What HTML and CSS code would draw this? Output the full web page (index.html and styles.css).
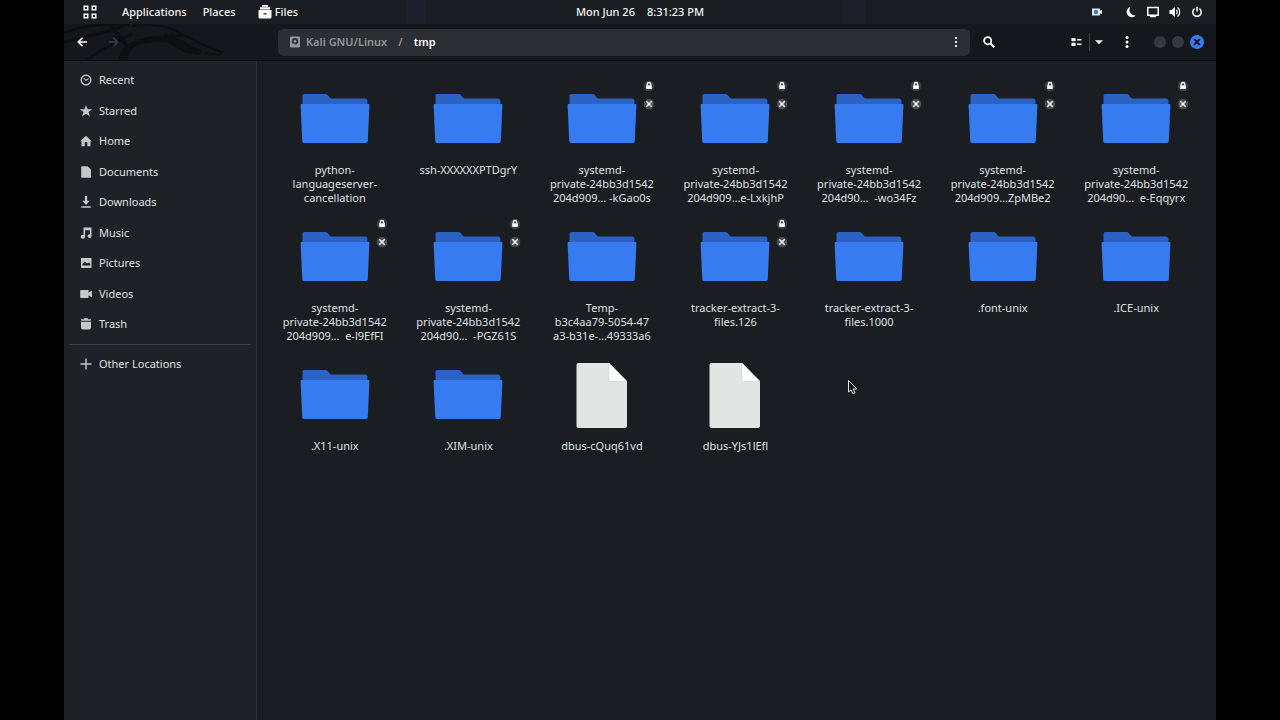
FILE: index.html
```html
<!DOCTYPE html>
<html lang="en">
<head>
<meta charset="utf-8">
<title>tmp - Files</title>
<link rel="stylesheet" href="styles.css">
</head>
<body>
<svg class="defs" aria-hidden="true">
  <symbol id="folder" viewBox="0 0 70 86">
    <path d="M2.500 30V18.500a1.500 1.500 0 0 1 1.500-1.500h21.500c1 0 1.500.3 2.200 1l2.300 2.700c.6.600 1.200.9 2 .9H65c1.500 0 2 .7 2.400 2V30z" fill="#2c62c4"/>
    <path d="M1.800 27h66.400c.9 0 1.300.6 1.200 1.400L67.800 64c0 1.200-.8 2-1.800 2H4c-1 0-1.800-.8-1.800-2L.6 28.400c0-.8.300-1.400 1.200-1.400z" fill="#367bf0"/>
  </symbol>
  <symbol id="file" viewBox="0 0 70 86">
    <path d="M11.500 10H42l18 18v45a2 2 0 0 1-2 2H11.500a2 2 0 0 1-2-2V12a2 2 0 0 1 2-2z" fill="#e3e4e4"/>
    <path d="M42 10l18 18.500H43.500a2 2 0 0 1-2-2V10z" fill="#fff"/>
    <path d="M41.500 11v15.500a2 2 0 0 0 2 2H60" fill="none" stroke="#c9cacb" stroke-width=".6"/>
  </symbol>
  <symbol id="lock" viewBox="0 0 12 12">
    <circle cx="6" cy="6" r="5.300" fill="#3b3e43"/>
    <path d="M3.200 5.300h5.600v3.600H3.200z" fill="#fff"/>
    <path d="M4.300 5.500V4.200a1.700 1.700 0 0 1 3.400 0v1.300" fill="none" stroke="#fff" stroke-width="1.300"/>
  </symbol>
  <symbol id="denied" viewBox="0 0 12 12">
    <circle cx="6" cy="6" r="5.300" fill="#4a4d51"/>
    <path d="M3.300 3.300l5.400 5.400m0-5.400l-5.400 5.400" stroke="#fff" stroke-width="1.400"/>
  </symbol>
</svg>

<div class="desktop">
  <header class="panel">
    <nav class="panel-left" aria-label="Desktop">
      <button class="bare" aria-label="Show apps"><svg width="14" height="14" viewBox="0 0 14 14" fill="none" stroke="#fff" stroke-width="1.500"><path d="M1.250 1.250h3.500v3.500h-3.500zM9.250 1.250h3.500v3.500h-3.500zM1.250 9.250h3.500v3.500h-3.500zM9.250 9.250h3.500v3.500h-3.500z"/></svg></button>
      <button class="bare apps">Applications</button>
      <button class="bare">Places</button>
      <button class="bare files"><svg width="14" height="14" viewBox="0 0 14 14" fill="#fff"><path d="M4 0h6v1.800H4zM2 2.300h10V4.500H2z"/><path d="M.5 5h13v7a1.500 1.500 0 0 1-1.500 1.500H2A1.500 1.500 0 0 1 .5 12zM5.500 8.300v1.200h3V8.300z" fill-rule="evenodd"/></svg>Files</button>
    </nav>
    <time class="clock"><span>Mon Jun 26</span><span>8:31:23 PM</span></time>
    <div class="status">
      <svg class="cam" width="12" height="12" viewBox="0 0 12 12"><path d="M1 2.500h8v2l2-.5v4l-2-.5v2H1z" fill="#dfe5ea"/><circle cx="5" cy="6" r="2.200" fill="#4678b8"/></svg>
      <svg width="12" height="12" viewBox="0 0 12 12"><path d="M5.500.8A5.300 5.300 0 1 0 10.800 9.500 5.600 5.600 0 0 1 5.500.8z" fill="#fff"/></svg>
      <svg width="12" height="12" viewBox="0 0 12 12" fill="none" stroke="#fff" stroke-width="1.500"><path d="M.8 1.500h10.400v7.800H.8z"/><path d="M3 10.500h6"/></svg>
      <svg width="12" height="12" viewBox="0 0 12 12"><path d="M.5 4h2.200L6 1v10L2.700 8H.5z" fill="#fff"/><path d="M7.300 4c1.200 1 1.200 3 0 4M8.500 1.500c3 2 3 7 0 9" fill="none" stroke="#fff" stroke-width="1.200"/></svg>
      <svg width="12" height="12" viewBox="0 0 12 12" fill="none" stroke="#fff" stroke-width="1.500"><path d="M3.600 2.700a4.200 4.200 0 1 0 4.800 0M6 .8v4.700"/></svg>
    </div>
  </header>

  <div class="toolbar">
    <svg class="dragon" width="160" height="37" viewBox="0 0 160 37" fill="none" stroke="#0d1013" aria-hidden="true">
      <path d="M0 9C18 2 40-2 66 1M0 18C20 13 42 9 60 2M22 37C34 28 50 18 68 10" stroke-width="3"/>
      <path d="M46 1l18 22" stroke-width="3"/>
      <path d="M54 37c2-8 4-12 8-15 12-9 24-10 40-10 12 0 18 5 26 10l10 4-3 5-16-3c-10-7-14-10-22-10-14 0-22 2-28 6-4 4-5 8-6 13z" fill="#0d1013" stroke="none"/>
      <path d="M100 13l2-4 3 4 3-5 3 4 4-4 3 5" fill="#0d1013"/>
      <path d="M68 2c22-3 38 0 50 8l28 14 12 4-3 3-14-2" stroke-width="2"/>
    </svg>
    <div class="history">
      <button class="bare" aria-label="Back"><svg width="12" height="12" viewBox="0 0 12 12" fill="none" stroke="#fff" stroke-width="1.600"><path d="M11 6H2.500M6.500 1.800L2.300 6l4.200 4.200"/></svg></button>
      <button class="bare" aria-label="Forward" disabled><svg width="12" height="12" viewBox="0 0 12 12" fill="none" stroke="#3b3f43" stroke-width="1.600"><path d="M1 6h8.500M5.500 1.800L9.700 6l-4.200 4.200"/></svg></button>
    </div>
    <div class="pathbar">
      <button class="bare crumb"><svg width="12" height="12" viewBox="0 0 12 12"><path d="M2 .5h8a1 1 0 0 1 1 1v9a1 1 0 0 1-1 1H2a1 1 0 0 1-1-1v-9a1 1 0 0 1 1-1zM6 2a3.200 3.200 0 1 0 0 6.400A3.200 3.200 0 0 0 6 2z" fill="#93969a" fill-rule="evenodd"/><circle cx="6" cy="5.200" r="1.300" fill="#93969a"/><path d="M3 10l2.500-3" stroke="#93969a"/></svg>Kali GNU/Linux</button>
      <span class="slash">/</span>
      <button class="bare current">tmp</button>
      <button class="bare more" aria-label="Folder menu"><svg width="4" height="12" viewBox="0 0 4 12" fill="#e4e6e8"><path d="M1 1h2v2H1zM1 5h2v2H1zM1 9h2v2H1z"/></svg></button>
    </div>
    <div class="tools">
      <button class="bare search" aria-label="Search"><svg width="12" height="12" viewBox="0 0 12 12" fill="none" stroke="#fff" stroke-width="1.700"><circle cx="4.700" cy="4.700" r="3.600"/><path d="M7.300 7.300l4 4" stroke-width="2"/></svg></button>
      <button class="bare" aria-label="List view"><svg width="12" height="12" viewBox="0 0 12 12" fill="#fff"><path d="M1.500 2h4v3.300h-4zM1.500 6.700h4V10h-4zM7 3h4.500v1.500H7zM7 7.500h4.500V9H7z"/></svg></button>
      <button class="bare drop" aria-label="View options"><svg width="8" height="12" viewBox="0 0 8 12" fill="#fff"><path d="M0 4.200h8L4 8.200z"/></svg></button>
      <button class="bare menu" aria-label="Menu"><svg width="4" height="14" viewBox="0 0 4 14" fill="#fff"><circle cx="2" cy="2.500" r="1.500"/><circle cx="2" cy="7" r="1.500"/><circle cx="2" cy="11.500" r="1.500"/></svg></button>
      <button class="dot" aria-label="Minimize"></button>
      <button class="dot" aria-label="Maximize"></button>
      <button class="dot close" aria-label="Close"><svg width="8" height="8" viewBox="0 0 8 8" stroke="#10151c" stroke-width="1.900"><path d="M1.200 1.200l5.600 5.600m0-5.600L1.200 6.800"/></svg></button>
    </div>
  </div>

  <div class="content">
    <nav class="sidebar" aria-label="Places">
      <div class="places">
        <a href="#"><svg viewBox="0 0 12 12"><circle cx="6" cy="6" r="4.800" fill="none" stroke="#c5c8ca" stroke-width="1.400"/><path d="M3.800 4.300L6 6.300l2.500-1.500" fill="none" stroke="#c5c8ca" stroke-width="1.100"/></svg>Recent</a>
        <a href="#"><svg viewBox="0 0 12 12"><path d="M6 .2l1.600 4H12L8.500 7l1.400 4.500L6 8.800l-3.900 2.700L3.500 7 0 4.200h4.400z"/></svg>Starred</a>
        <a href="#"><svg viewBox="0 0 12 12"><path d="M6 .7l5.700 5.500h-1.200v5H7.300V8a1.300 1.300 0 0 0-2.600 0v3.200H1.500v-5H.3z"/></svg>Home</a>
        <a href="#"><svg viewBox="0 0 12 12"><path d="M2 .3h5.500L11 3.800V11a.8.800 0 0 1-.8.800H2a.8.800 0 0 1-.8-.8V1.100A.8.800 0 0 1 2 .3z"/></svg>Documents</a>
        <a href="#"><svg viewBox="0 0 12 12"><path d="M4.900 0h2.200v4.800h2.500L6 9 2.400 4.800h2.500zM1.300 10.300h9.400v1.400H1.300z"/></svg>Downloads</a>
        <a href="#"><svg viewBox="0 0 12 12"><path d="M3.500.5h8V9a2 1.900 0 1 1-1.600-1.800V3.300H5.100v6.500A2.200 2 0 1 1 3.500 7.900z"/></svg>Music</a>
        <a href="#"><svg viewBox="0 0 12 12"><path d="M1 1h10.500v10H1zM2.500 8.500h7.700V6.800L8.500 5.500l-1.700 1L5 4.500 2.500 7z" fill-rule="evenodd"/></svg>Pictures</a>
        <a href="#"><svg viewBox="0 0 12 12"><path d="M1 2h7.500v2.700L12 2.500v7L8.500 7.300V10H1a.8.800 0 0 1-.8-.8V2.800A.8.800 0 0 1 1 2z"/></svg>Videos</a>
        <a href="#"><svg viewBox="0 0 12 12"><path d="M4 .3h4v.9h3v1.600H1V1.200h3zM1 3.700h10v5.800a2 2 0 0 1-2 2H3a2 2 0 0 1-2-2z"/></svg>Trash</a>
      </div>
      <hr>
      <a href="#"><svg viewBox="0 0 12 12"><path d="M5.300.5h1.400v4.800h4.800v1.400H6.700v4.800H5.300V6.700H.5V5.300h4.800z"/></svg>Other Locations</a>
    </nav>

    <main class="grid">
      <div class="item"><svg class="icon"><use href="#folder"/></svg><span>python-<br>languageserver-<br>cancellation</span></div>
      <div class="item"><svg class="icon"><use href="#folder"/></svg><span>ssh-XXXXXXPTDgrY</span></div>
      <div class="item"><svg class="icon"><use href="#folder"/></svg><div class="badges"><svg><use href="#lock"/></svg><svg><use href="#denied"/></svg></div><span>systemd-<br>private-24bb3d1542<br>204d909… -kGao0s</span></div>
      <div class="item"><svg class="icon"><use href="#folder"/></svg><div class="badges"><svg><use href="#lock"/></svg><svg><use href="#denied"/></svg></div><span>systemd-<br>private-24bb3d1542<br>204d909…e-LxkjhP</span></div>
      <div class="item"><svg class="icon"><use href="#folder"/></svg><div class="badges"><svg><use href="#lock"/></svg><svg><use href="#denied"/></svg></div><span>systemd-<br>private-24bb3d1542<br>204d90…&nbsp; -wo34Fz</span></div>
      <div class="item"><svg class="icon"><use href="#folder"/></svg><div class="badges"><svg><use href="#lock"/></svg><svg><use href="#denied"/></svg></div><span>systemd-<br>private-24bb3d1542<br>204d909…ZpMBe2</span></div>
      <div class="item"><svg class="icon"><use href="#folder"/></svg><div class="badges"><svg><use href="#lock"/></svg><svg><use href="#denied"/></svg></div><span>systemd-<br>private-24bb3d1542<br>204d90…&nbsp; e-Eqqyrx</span></div>
      <div class="item"><svg class="icon"><use href="#folder"/></svg><div class="badges"><svg><use href="#lock"/></svg><svg><use href="#denied"/></svg></div><span>systemd-<br>private-24bb3d1542<br>204d909…&nbsp; e-l9EfFI</span></div>
      <div class="item"><svg class="icon"><use href="#folder"/></svg><div class="badges"><svg><use href="#lock"/></svg><svg><use href="#denied"/></svg></div><span>systemd-<br>private-24bb3d1542<br>204d90…&nbsp; -PGZ61S</span></div>
      <div class="item"><svg class="icon"><use href="#folder"/></svg><span>Temp-<br>b3c4aa79-5054-47<br>a3-b31e-…49333a6</span></div>
      <div class="item"><svg class="icon"><use href="#folder"/></svg><div class="badges"><svg><use href="#lock"/></svg><svg><use href="#denied"/></svg></div><span>tracker-extract-3-<br>files.126</span></div>
      <div class="item"><svg class="icon"><use href="#folder"/></svg><span>tracker-extract-3-<br>files.1000</span></div>
      <div class="item"><svg class="icon"><use href="#folder"/></svg><span>.font-unix</span></div>
      <div class="item"><svg class="icon"><use href="#folder"/></svg><span>.ICE-unix</span></div>
      <div class="item"><svg class="icon"><use href="#folder"/></svg><span>.X11-unix</span></div>
      <div class="item"><svg class="icon"><use href="#folder"/></svg><span>.XIM-unix</span></div>
      <div class="item"><svg class="icon"><use href="#file"/></svg><span>dbus-cQuq61vd</span></div>
      <div class="item"><svg class="icon"><use href="#file"/></svg><span>dbus-YJs1lEfl</span></div>
    </main>
  </div>
</div>
<svg class="pointer" width="12" height="16" viewBox="0 0 12 16" aria-hidden="true"><path d="M1.500 1.500v11.500l2.500-2.200 1.900 4 2.100-1-1.900-3.800h3.700z" fill="#15181c" stroke="#e8e8e8"/></svg>
</body>
</html>
```
FILE: styles.css
```css
* { box-sizing: border-box; }
body {
  margin: 0;
  padding: 0 5%;
  background: #000;
  color: #dfe1e3;
  font: 11px/14px "Noto Sans", sans-serif;
}
.defs { display: none; }
svg { display: block; flex: none; }
.desktop {
  min-height: 100vh;
  display: flex;
  flex-direction: column;
  background: #1a1d21;
}
.bare {
  display: flex;
  align-items: center;
  gap: 5px;
  margin: 0;
  padding: 0;
  border: 0;
  background: none;
  color: inherit;
  font: inherit;
}
.panel {
  display: grid;
  grid-template-columns: 1fr auto 1fr;
  align-items: center;
  height: 24px;
  background: linear-gradient(90deg, transparent 342px, #1f202b 342px 362px, transparent 362px 779px, #1f1f29 779px 801px, transparent 801px) #1a1d21;
  color: #f2f3f4;
  font-weight: 500;
}
.panel-left { display: flex; align-items: center; padding-left: 19px; }
.apps { margin: 0 16px 0 25px; }
.files { margin-left: 22px; gap: 3px; }
.clock { display: flex; gap: 12px; }
.status { display: flex; justify-content: flex-end; gap: 10px; padding-right: 13px; }
.cam { margin-right: 12px; }
.toolbar {
  position: relative;
  display: flex;
  align-items: center;
  height: 37px;
  background: #14171b;
  border-bottom: 1px solid #0d0f12;
}
.dragon { position: absolute; left: 0; top: 0; }
.history { position: relative; display: flex; gap: 20px; width: 214px; padding-left: 12px; }
.pathbar {
  flex: 1;
  display: flex;
  align-items: center;
  height: 27px;
  padding: 0 12px 0 11px;
  border-radius: 5px;
  background: #2b2e32;
  color: #93969a;
  font-weight: 600;
}
.slash { margin: 0 11px; }
.current { color: #fff; }
.more { margin-left: auto; }
.tools { display: flex; align-items: center; width: 246px; padding: 0 12px 0 13px; }
.search { margin-right: auto; }
.drop { height: 18px; margin-left: 7px; padding-left: 5px; border-left: 1px solid #3a3d42; }
.menu { margin: 0 25px 0 22px; }
.dot {
  display: flex;
  align-items: center;
  justify-content: center;
  width: 12px;
  height: 12px;
  margin-right: 6px;
  padding: 0;
  border: 0;
  border-radius: 50%;
  background: #36383f;
}
.close { width: 14px; height: 14px; margin: 0; background: #367bf0; }
.content { flex: 1; display: flex; }
.sidebar {
  flex: none;
  width: 193px;
  padding: 4px 5px;
  background: #1e2227;
  border-right: 1px solid #2d3035;
}
.places {
  display: flex;
  flex-direction: column;
  justify-content: space-between;
  min-height: 274px;
}
.sidebar a {
  display: flex;
  align-items: center;
  gap: 7px;
  height: 30px;
  padding-left: 11px;
  color: inherit;
  text-decoration: none;
}
.sidebar svg { width: 12px; height: 12px; fill: #c5c8ca; }
.sidebar hr { height: 1px; margin: 5px 0 4px; border: 0; background: #3a3e42; }
.grid {
  flex: 1;
  display: grid;
  grid-template-columns: repeat(7, 1fr);
  grid-auto-rows: minmax(138px, auto);
  align-content: start;
  padding: 16px 13px 16px 11px;
}
.item {
  position: relative;
  display: flex;
  flex-direction: column;
  align-items: center;
  text-align: center;
  white-space: nowrap;
}
.icon { width: 70px; height: 86px; }
.badges { position: absolute; left: calc(50% + 41px); top: 3px; display: grid; gap: 6px; }
.badges svg { width: 12px; height: 12px; }
.pointer { position: absolute; left: 847px; top: 379px; }
```
